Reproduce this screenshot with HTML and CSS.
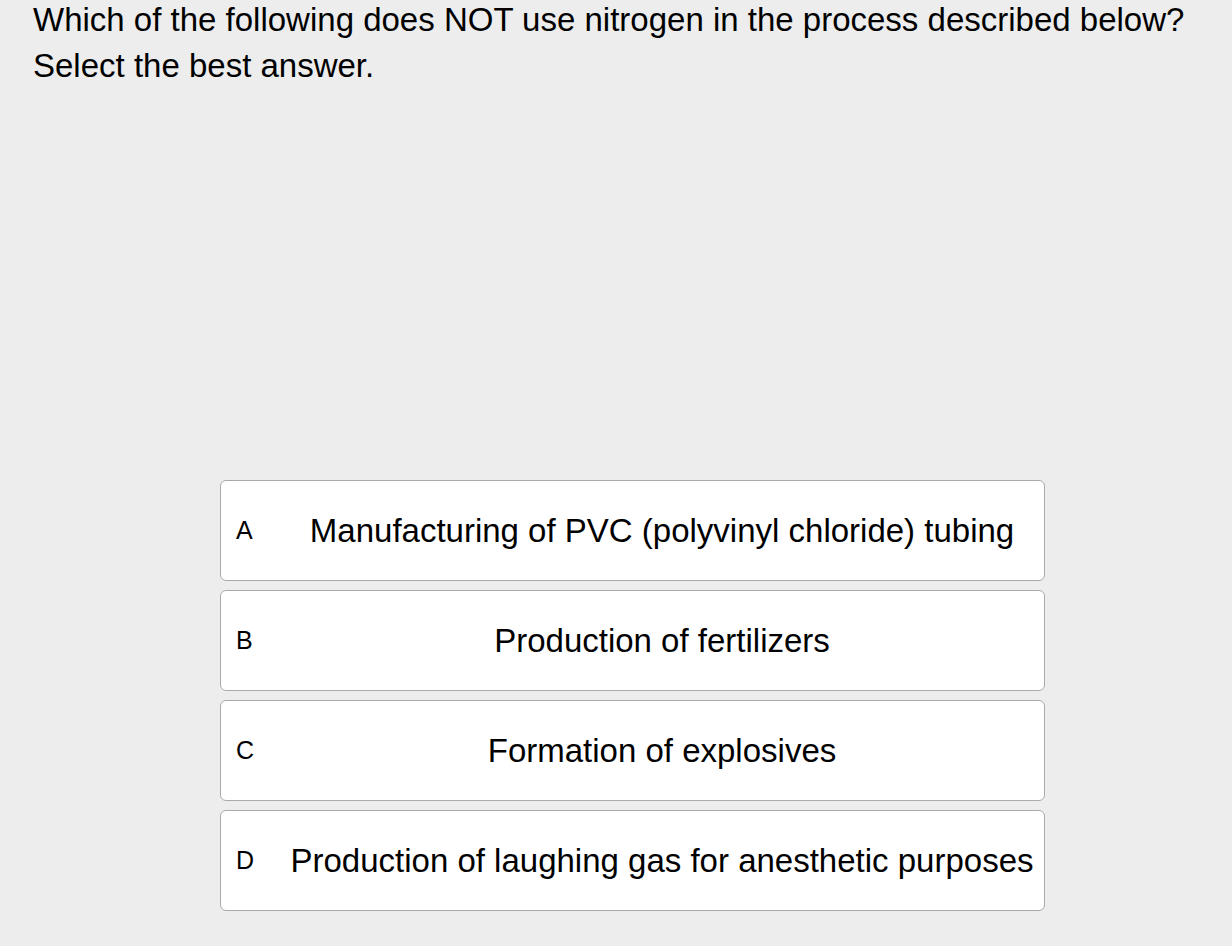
FILE: index.html
```html
<!DOCTYPE html>
<html>
<head>
<meta charset="utf-8">
<link rel="stylesheet" href="styles.css">
</head>
<body>
<div class="page">
  <div class="question">
    <p class="q-line">Which of the following does NOT use nitrogen in the process described below?</p>
    <p class="q-line">Select the best answer.</p>
  </div>
  <div class="options">
    <div class="option"><span class="label">A</span><span class="text">Manufacturing of PVC (polyvinyl chloride) tubing</span></div>
    <div class="option"><span class="label">B</span><span class="text">Production of fertilizers</span></div>
    <div class="option"><span class="label">C</span><span class="text">Formation of explosives</span></div>
    <div class="option"><span class="label">D</span><span class="text">Production of laughing gas for anesthetic purposes</span></div>
  </div>
</div>
</body>
</html>
```
FILE: styles.css
```css
html, body {
  margin: 0;
  padding: 0;
  background: #ededed;
}
body {
  font-family: "Liberation Sans", Arial, sans-serif;
  color: #000;
}
.page {
  width: 1232px;
  height: 946px;
  box-sizing: border-box;
  padding-top: 0;
  overflow: hidden;
}
.question {
  padding: 0 0 0 33px;
  margin-top: -3px;
}
.q-line {
  margin: 0;
  font-size: 33px;
  line-height: 46px;
}
.options {
  margin-left: 220px;
  margin-top: 391px;
  width: 825px;
  display: flex;
  flex-direction: column;
  gap: 9px;
}
.option {
  box-sizing: border-box;
  height: 101px;
  background: #fff;
  border: 1px solid #aaaaaa;
  border-radius: 6px;
  display: flex;
  align-items: center;
  padding: 0 10px 0 15px;
}
.label {
  width: 54px;
  flex: none;
  font-size: 25px;
}
.text {
  flex: 1;
  text-align: center;
  font-size: 33px;
  white-space: nowrap;
}
```
